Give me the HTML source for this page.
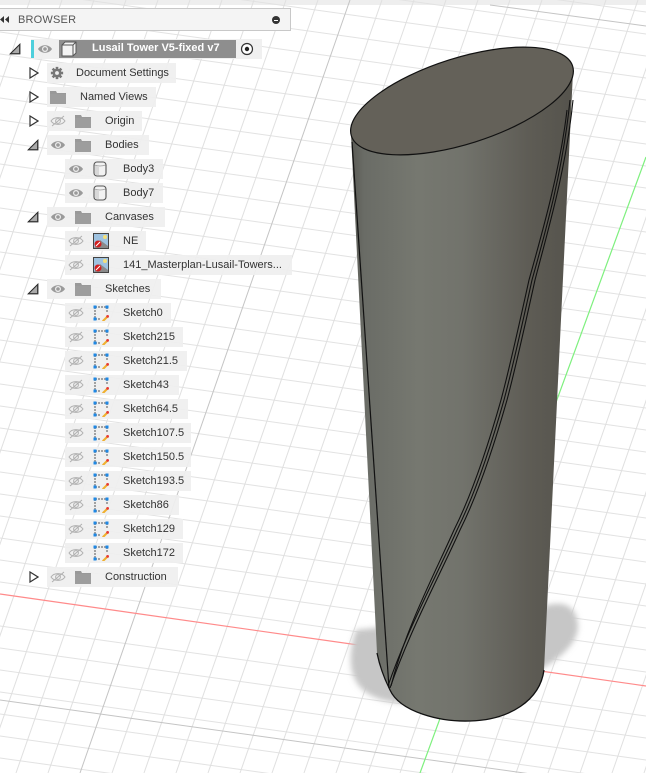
<!DOCTYPE html>
<html><head><meta charset="utf-8">
<style>
html,body{margin:0;padding:0;width:646px;height:773px;overflow:hidden;}
body{position:relative;background:#fff;font-family:"Liberation Sans",sans-serif;}
svg.bg{position:absolute;left:0;top:0;}
.hdr{position:absolute;left:-1px;top:8px;width:292px;height:23px;background:#f4f4f4;border:1px solid #c8c8c8;box-sizing:border-box;}
.hdr .t{position:absolute;left:18px;top:5px;font-size:11px;color:#555;letter-spacing:0.2px;}
.hdr .dot{position:absolute;left:272px;top:7px;width:8px;height:8px;border-radius:50%;background:#333;}
.hdr .dot:after{content:"";position:absolute;left:2px;top:3.5px;width:4px;height:1px;background:#fff;}
.hdr .rw{position:absolute;left:0;top:7px;}
.tree{position:absolute;left:0;top:1px;width:300px;height:600px;}
.r{position:absolute;height:20px;background:rgba(239,239,239,0.93);}
.r span{position:absolute;top:4px;font-size:11px;color:#333;white-space:nowrap;}
.ic{position:absolute;}
.tri{position:absolute;}
</style></head><body>
<svg class="bg" width="646" height="773" viewBox="0 0 646 773">
<defs>
<linearGradient id="bd" x1="0" x2="1" y1="0" y2="0">
<stop offset="0" stop-color="#5a5a54"/>
<stop offset="0.06" stop-color="#6a6c66"/>
<stop offset="0.3" stop-color="#767870"/>
<stop offset="0.5" stop-color="#72736c"/>
<stop offset="0.8" stop-color="#5e5c55"/>
<stop offset="1" stop-color="#55534c"/>
</linearGradient>
<filter id="bl"><feGaussianBlur stdDeviation="3"/></filter>
</defs>
<rect x="0" y="0" width="646" height="5" fill="#eeeeee"/>
<g stroke="#e2e2e2" stroke-width="1">
<line x1="0" y1="-100" x2="646" y2="-10"/><line x1="0" y1="-78" x2="646" y2="12"/><line x1="0" y1="-56" x2="646" y2="34"/><line x1="0" y1="-34" x2="646" y2="56"/><line x1="0" y1="-12" x2="646" y2="78"/><line x1="0" y1="10" x2="646" y2="100"/><line x1="0" y1="32" x2="646" y2="122"/><line x1="0" y1="54" x2="646" y2="144"/><line x1="0" y1="76" x2="646" y2="166"/><line x1="0" y1="98" x2="646" y2="188"/><line x1="0" y1="120" x2="646" y2="210"/><line x1="0" y1="142" x2="646" y2="232"/><line x1="0" y1="164" x2="646" y2="254"/><line x1="0" y1="186" x2="646" y2="276"/><line x1="0" y1="208" x2="646" y2="298"/><line x1="0" y1="230" x2="646" y2="320"/><line x1="0" y1="252" x2="646" y2="342"/><line x1="0" y1="274" x2="646" y2="364"/><line x1="0" y1="296" x2="646" y2="386"/><line x1="0" y1="318" x2="646" y2="408"/><line x1="0" y1="340" x2="646" y2="430"/><line x1="0" y1="362" x2="646" y2="452"/><line x1="0" y1="384" x2="646" y2="474"/><line x1="0" y1="406" x2="646" y2="496"/><line x1="0" y1="428" x2="646" y2="518"/><line x1="0" y1="450" x2="646" y2="540"/><line x1="0" y1="472" x2="646" y2="562"/><line x1="0" y1="494" x2="646" y2="584"/><line x1="0" y1="516" x2="646" y2="606"/><line x1="0" y1="538" x2="646" y2="628"/><line x1="0" y1="560" x2="646" y2="650"/><line x1="0" y1="582" x2="646" y2="672"/><line x1="0" y1="626" x2="646" y2="716"/><line x1="0" y1="648" x2="646" y2="738"/><line x1="0" y1="670" x2="646" y2="760"/><line x1="0" y1="692" x2="646" y2="782"/><line x1="0" y1="714" x2="646" y2="804"/><line x1="0" y1="736" x2="646" y2="826"/><line x1="0" y1="758" x2="646" y2="848"/>
</g>
<g stroke="#e0e0e0" stroke-width="1">
<line x1="-240" y1="773" x2="30" y2="0"/><line x1="-208" y1="773" x2="62" y2="0"/><line x1="-176" y1="773" x2="94" y2="0"/><line x1="-144" y1="773" x2="126" y2="0"/><line x1="-112" y1="773" x2="158" y2="0"/><line x1="-80" y1="773" x2="190" y2="0"/><line x1="-48" y1="773" x2="222" y2="0"/><line x1="-16" y1="773" x2="254" y2="0"/><line x1="16" y1="773" x2="286" y2="0"/><line x1="48" y1="773" x2="318" y2="0"/><line x1="112" y1="773" x2="382" y2="0"/><line x1="144" y1="773" x2="414" y2="0"/><line x1="176" y1="773" x2="446" y2="0"/><line x1="208" y1="773" x2="478" y2="0"/><line x1="240" y1="773" x2="510" y2="0"/><line x1="272" y1="773" x2="542" y2="0"/><line x1="304" y1="773" x2="574" y2="0"/><line x1="336" y1="773" x2="606" y2="0"/><line x1="368" y1="773" x2="638" y2="0"/><line x1="400" y1="773" x2="670" y2="0"/><line x1="452" y1="773" x2="722" y2="0"/><line x1="484" y1="773" x2="754" y2="0"/><line x1="516" y1="773" x2="786" y2="0"/><line x1="548" y1="773" x2="818" y2="0"/><line x1="580" y1="773" x2="850" y2="0"/><line x1="612" y1="773" x2="882" y2="0"/><line x1="644" y1="773" x2="914" y2="0"/>
</g>
<g stroke="#c4c4c4" stroke-width="1">
<line x1="0" y1="700" x2="646" y2="790"/>
<line x1="80" y1="773" x2="350" y2="0"/>
<line x1="490" y1="5" x2="646" y2="26"/>
</g>
<line x1="0" y1="594" x2="646" y2="686" stroke="#ff8a8a" stroke-width="1.2"/>
<line x1="420" y1="773" x2="646" y2="157" stroke="#7ef07e" stroke-width="1.2"/>
<path d="M356,630 C340,680 360,706 420,703 C500,698 580,660 578,625 C576,600 555,600 535,610 Z" fill="#c6c6c6" filter="url(#bl)"/>
<path d="M351,135 L377,653 C380,668 385,680 390,690 C400,712 440,722 470,721 C510,720 540,700 544,670 L573,72 Z" fill="url(#bd)"/>
<path d="M377,653 C380,668 385,680 390,690 C400,712 440,722 470,721 C510,720 540,700 544,670" fill="none" stroke="#111" stroke-width="1.3"/>
<ellipse cx="462" cy="101" rx="116" ry="43" transform="rotate(-17.5 462 101)" fill="#646159" stroke="#111" stroke-width="1.2"/>
<path d="M352,142 L389,688" stroke="#111" stroke-width="1.2" fill="none"/>
<g fill="none" stroke="#111" stroke-width="1.1">
<path d="M573,100 C566,170 548,230 535,280 C524,330 515,370 507,400 C490,460 475,500 460,530 C440,575 410,630 390,688"/>
<path d="M570,100 C563,170 546,230 532,280 C521,330 512,370 504,400 C487,460 472,500 457,530 C437,575 407,630 388,686"/>
<path d="M567,110 C560,170 543,230 529,280 C518,330 509,370 501,400 C484,460 469,500 454,530 C434,575 405,630 391,686"/>
</g>
</svg>

<svg width="0" height="0" style="position:absolute;left:0;top:0">
<defs>
<symbol id="eye" viewBox="0 0 16 12"><path d="M1,6 C4,1 12,1 15,6 C12,11 4,11 1,6Z" fill="#9a9a9a"/><circle cx="8" cy="6" r="3" fill="#eee"/><circle cx="8" cy="6" r="1.8" fill="#9a9a9a"/></symbol>
<symbol id="eyeo" viewBox="0 0 16 12"><path d="M1,6 C4,1.5 12,1.5 15,6 C12,10.5 4,10.5 1,6Z" fill="none" stroke="#b0b0b0" stroke-width="1"/><circle cx="8" cy="6" r="2.4" fill="none" stroke="#b0b0b0"/><line x1="2" y1="11" x2="14" y2="1" stroke="#b0b0b0" stroke-width="1"/></symbol>
<symbol id="fold" viewBox="0 0 16 13"><path d="M0,0 H6 L7,2 H16 V13 H0Z" fill="#999"/><rect x="0" y="3" width="16" height="10" fill="#9d9d9d"/></symbol>
<symbol id="body" viewBox="0 0 14 16"><rect x="1" y="1" width="12" height="14" rx="3" fill="#f2f2f2" stroke="#555" stroke-width="1.1"/><path d="M1.5,4 Q7,6 12.5,4" fill="none" stroke="#999" stroke-width="0.8"/><rect x="2" y="5" width="4" height="9" fill="#d8d8d8"/></symbol>
<symbol id="canv" viewBox="0 0 16 16"><rect x="0.5" y="0.5" width="15" height="15" fill="#9ec2e0" stroke="#444"/><path d="M1,15 L7,7 L15,13 V15Z" fill="#8a8a8a"/><circle cx="12" cy="4" r="2" fill="#f4e07a"/><circle cx="5" cy="11" r="3.5" fill="#d21f1f"/><line x1="3" y1="13" x2="7" y2="9" stroke="#fff" stroke-width="1"/></symbol>
<symbol id="sk" viewBox="0 0 16 16"><path d="M2,2 H14 M2,2 V14 H8 M14,2 V8" fill="none" stroke="#555" stroke-width="1" stroke-dasharray="2,1"/><rect x="0.5" y="0.5" width="3" height="3" fill="#1e88e5"/><rect x="12.5" y="0.5" width="3" height="3" fill="#1e88e5"/><rect x="0.5" y="12.5" width="3" height="3" fill="#1e88e5"/><path d="M9,15.5 L13.5,11 L15,12.5 L10.5,17Z" fill="#f0b030"/><circle cx="14.6" cy="11.4" r="1.4" fill="#e53935"/></symbol>
<symbol id="gear" viewBox="0 0 16 16"><circle cx="8" cy="8" r="5" fill="#777"/><g stroke="#777" stroke-width="3"><line x1="8" y1="1" x2="8" y2="15"/><line x1="1" y1="8" x2="15" y2="8"/><line x1="3" y1="3" x2="13" y2="13"/><line x1="13" y1="3" x2="3" y2="13"/></g><circle cx="8" cy="8" r="2.2" fill="#eee"/></symbol>
<symbol id="tr" viewBox="0 0 10 12"><path d="M1,1 L9,6 L1,11Z" fill="#fff" stroke="#333" stroke-width="1.2"/></symbol>
<symbol id="td" viewBox="0 0 12 12"><path d="M11,1 V11 H1Z" fill="#555" stroke="#222" stroke-width="0.8"/><path d="M10,3 V10 H3Z" fill="#aaa"/></symbol>
</defs></svg>

<div class="hdr"><svg class="rw" width="10" height="7" viewBox="0 0 10 7"><path d="M0,3.5 L4,0 V7Z M5,3.5 L9,0 V7Z" fill="#333"/></svg><span class="t">BROWSER</span><div class="dot"></div></div>

<div class="tree">
<svg class="tri" style="left:9px;top:42px" width="12" height="12"><use href="#td"/></svg>
<div class="r" style="left:31px;top:38px;width:231px"></div>
<div style="position:absolute;left:31px;top:39px;width:3px;height:18px;background:#4ecfdc"></div>
<svg class="ic" style="left:37px;top:42px" width="16" height="12"><use href="#eye"/></svg>
<div style="position:absolute;left:59px;top:39px;width:177px;height:18px;background:#8e8e8e"></div>
<svg class="ic" style="left:61px;top:40px" width="16" height="16" viewBox="0 0 16 16"><path d="M1,4 L4,1 H15 V12 L12,15 H1Z" fill="#f3f3f3" stroke="#555"/><path d="M1,4 H12 V15 M12,4 L15,1" fill="none" stroke="#555"/></svg>
<span style="position:absolute;left:92px;top:41px;font-size:11px;font-weight:bold;color:#fff;">Lusail Tower V5-fixed v7</span>
<svg class="ic" style="left:240px;top:41px" width="14" height="14"><circle cx="7" cy="7" r="5.5" fill="#fff" stroke="#333" stroke-width="1.2"/><circle cx="7" cy="7" r="2.2" fill="#222"/></svg>

<svg class="tri" style="left:29px;top:66px" width="10" height="12"><use href="#tr"/></svg>
<div class="r" style="left:47px;top:62px;width:129px"><svg class="ic" style="left:3px;top:3px" width="14" height="14"><use href="#gear"/></svg><span style="left:29px">Document Settings</span></div>
<svg class="tri" style="left:29px;top:90px" width="10" height="12"><use href="#tr"/></svg>
<div class="r" style="left:47px;top:86px;width:109px"><svg class="ic" style="left:3px;top:4px" width="16" height="13"><use href="#fold"/></svg><span style="left:33px">Named Views</span></div>
<svg class="tri" style="left:29px;top:114px" width="10" height="12"><use href="#tr"/></svg>
<div class="r" style="left:47px;top:110px;width:95px"><svg class="ic" style="left:3px;top:4px" width="16" height="12"><use href="#eyeo"/></svg><svg class="ic" style="left:28px;top:4px" width="16" height="13"><use href="#fold"/></svg><span style="left:58px">Origin</span></div>
<svg class="tri" style="left:27px;top:138px" width="12" height="12"><use href="#td"/></svg>
<div class="r" style="left:47px;top:134px;width:102px"><svg class="ic" style="left:3px;top:4px" width="16" height="12"><use href="#eye"/></svg><svg class="ic" style="left:28px;top:4px" width="16" height="13"><use href="#fold"/></svg><span style="left:58px">Bodies</span></div>

<div class="r" style="left:65px;top:158px;width:98px"><svg class="ic" style="left:3px;top:4px" width="16" height="12"><use href="#eye"/></svg><svg class="ic" style="left:28px;top:2px" width="14" height="16"><use href="#body"/></svg><span style="left:58px">Body3</span></div>
<div class="r" style="left:65px;top:182px;width:98px"><svg class="ic" style="left:3px;top:4px" width="16" height="12"><use href="#eye"/></svg><svg class="ic" style="left:28px;top:2px" width="14" height="16"><use href="#body"/></svg><span style="left:58px">Body7</span></div>

<svg class="tri" style="left:27px;top:210px" width="12" height="12"><use href="#td"/></svg>
<div class="r" style="left:47px;top:206px;width:118px"><svg class="ic" style="left:3px;top:4px" width="16" height="12"><use href="#eye"/></svg><svg class="ic" style="left:28px;top:4px" width="16" height="13"><use href="#fold"/></svg><span style="left:58px">Canvases</span></div>
<div class="r" style="left:65px;top:230px;width:81px"><svg class="ic" style="left:3px;top:4px" width="16" height="12"><use href="#eyeo"/></svg><svg class="ic" style="left:28px;top:2px" width="16" height="16"><use href="#canv"/></svg><span style="left:58px">NE</span></div>
<div class="r" style="left:65px;top:254px;width:227px"><svg class="ic" style="left:3px;top:4px" width="16" height="12"><use href="#eyeo"/></svg><svg class="ic" style="left:28px;top:2px" width="16" height="16"><use href="#canv"/></svg><span style="left:58px">141_Masterplan-Lusail-Towers...</span></div>

<svg class="tri" style="left:27px;top:282px" width="12" height="12"><use href="#td"/></svg>
<div class="r" style="left:47px;top:278px;width:114px"><svg class="ic" style="left:3px;top:4px" width="16" height="12"><use href="#eye"/></svg><svg class="ic" style="left:28px;top:4px" width="16" height="13"><use href="#fold"/></svg><span style="left:58px">Sketches</span></div>

<div class="r" style="left:65px;top:302px;width:106px"><svg class="ic" style="left:3px;top:4px" width="16" height="12"><use href="#eyeo"/></svg><svg class="ic" style="left:28px;top:2px" width="16" height="16"><use href="#sk"/></svg><span style="left:58px">Sketch0</span></div>
<div class="r" style="left:65px;top:326px;width:118px"><svg class="ic" style="left:3px;top:4px" width="16" height="12"><use href="#eyeo"/></svg><svg class="ic" style="left:28px;top:2px" width="16" height="16"><use href="#sk"/></svg><span style="left:58px">Sketch215</span></div>
<div class="r" style="left:65px;top:350px;width:122px"><svg class="ic" style="left:3px;top:4px" width="16" height="12"><use href="#eyeo"/></svg><svg class="ic" style="left:28px;top:2px" width="16" height="16"><use href="#sk"/></svg><span style="left:58px">Sketch21.5</span></div>
<div class="r" style="left:65px;top:374px;width:114px"><svg class="ic" style="left:3px;top:4px" width="16" height="12"><use href="#eyeo"/></svg><svg class="ic" style="left:28px;top:2px" width="16" height="16"><use href="#sk"/></svg><span style="left:58px">Sketch43</span></div>
<div class="r" style="left:65px;top:398px;width:123px"><svg class="ic" style="left:3px;top:4px" width="16" height="12"><use href="#eyeo"/></svg><svg class="ic" style="left:28px;top:2px" width="16" height="16"><use href="#sk"/></svg><span style="left:58px">Sketch64.5</span></div>
<div class="r" style="left:65px;top:422px;width:126px"><svg class="ic" style="left:3px;top:4px" width="16" height="12"><use href="#eyeo"/></svg><svg class="ic" style="left:28px;top:2px" width="16" height="16"><use href="#sk"/></svg><span style="left:58px">Sketch107.5</span></div>
<div class="r" style="left:65px;top:446px;width:126px"><svg class="ic" style="left:3px;top:4px" width="16" height="12"><use href="#eyeo"/></svg><svg class="ic" style="left:28px;top:2px" width="16" height="16"><use href="#sk"/></svg><span style="left:58px">Sketch150.5</span></div>
<div class="r" style="left:65px;top:470px;width:126px"><svg class="ic" style="left:3px;top:4px" width="16" height="12"><use href="#eyeo"/></svg><svg class="ic" style="left:28px;top:2px" width="16" height="16"><use href="#sk"/></svg><span style="left:58px">Sketch193.5</span></div>
<div class="r" style="left:65px;top:494px;width:114px"><svg class="ic" style="left:3px;top:4px" width="16" height="12"><use href="#eyeo"/></svg><svg class="ic" style="left:28px;top:2px" width="16" height="16"><use href="#sk"/></svg><span style="left:58px">Sketch86</span></div>
<div class="r" style="left:65px;top:518px;width:118px"><svg class="ic" style="left:3px;top:4px" width="16" height="12"><use href="#eyeo"/></svg><svg class="ic" style="left:28px;top:2px" width="16" height="16"><use href="#sk"/></svg><span style="left:58px">Sketch129</span></div>
<div class="r" style="left:65px;top:542px;width:118px"><svg class="ic" style="left:3px;top:4px" width="16" height="12"><use href="#eyeo"/></svg><svg class="ic" style="left:28px;top:2px" width="16" height="16"><use href="#sk"/></svg><span style="left:58px">Sketch172</span></div>

<svg class="tri" style="left:29px;top:570px" width="10" height="12"><use href="#tr"/></svg>
<div class="r" style="left:47px;top:566px;width:131px"><svg class="ic" style="left:3px;top:4px" width="16" height="12"><use href="#eyeo"/></svg><svg class="ic" style="left:28px;top:4px" width="16" height="13"><use href="#fold"/></svg><span style="left:58px">Construction</span></div>
</div>
</body></html>
